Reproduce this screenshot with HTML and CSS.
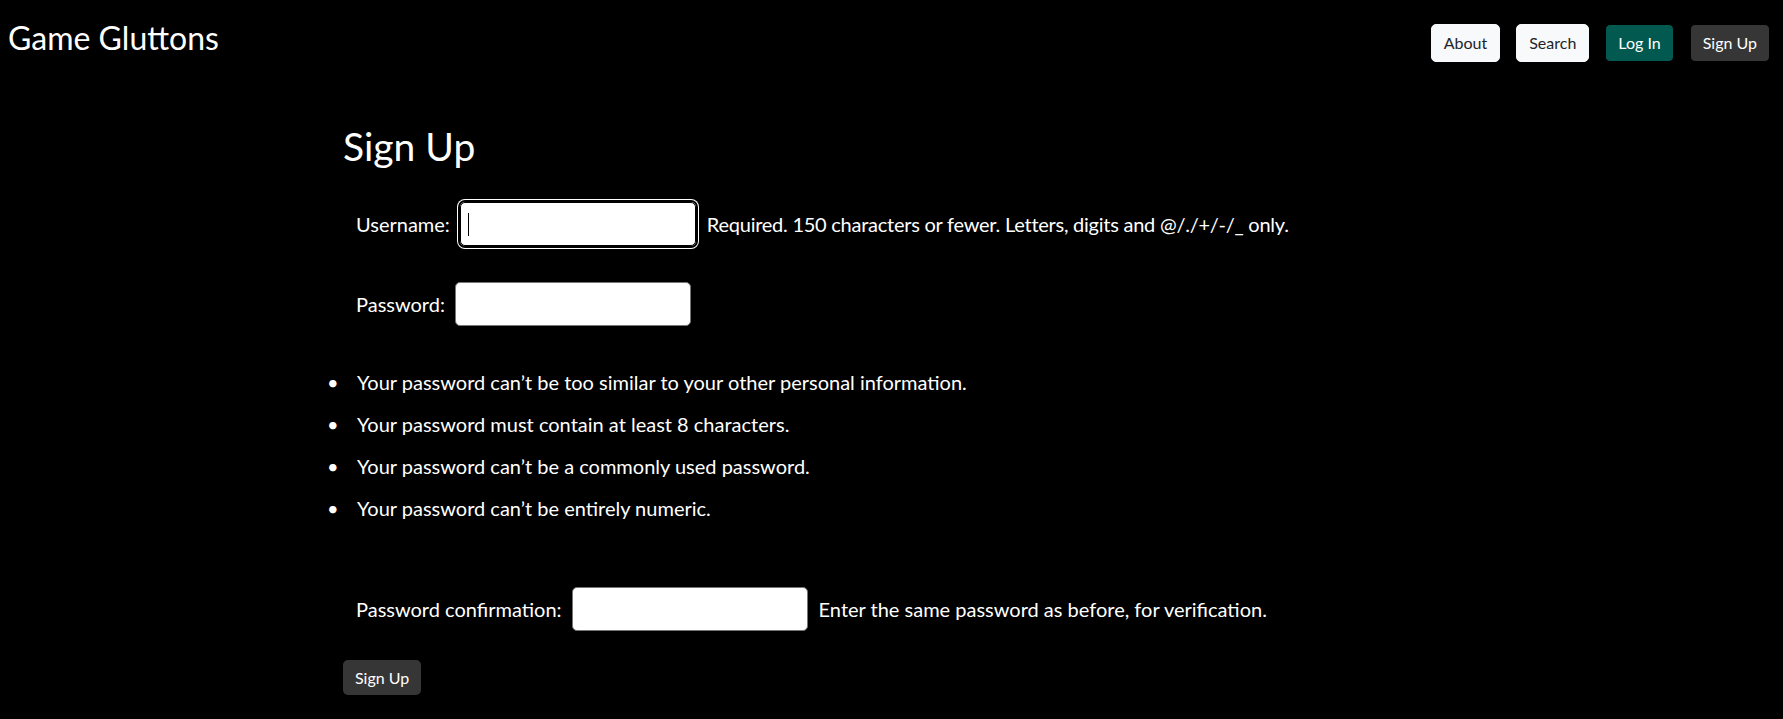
FILE: index.html
```html
<!DOCTYPE html>
<html lang="en">
<head>
<meta charset="utf-8">
<title>Sign Up - Game Gluttons</title>
<link rel="stylesheet" href="styles.css">
</head>
<body>
<header class="topbar">
  <div class="brand">Game Gluttons</div>
  <nav class="nav">
    <a class="btn btn-light" href="#">About</a>
    <a class="btn btn-light" href="#">Search</a>
    <a class="btn btn-teal" href="#">Log In</a>
    <a class="btn btn-dark" href="#">Sign Up</a>
  </nav>
</header>
<main class="content">
  <h1 class="title">Sign Up</h1>
  <form class="form">
    <div class="field field-user">
      <label for="u">Username:</label>
      <input id="u" class="input input-focus" type="text">
      <span class="help help-user">Required. 150 characters or fewer. Letters, digits and @/./+/-/_ only.</span>
    </div>
    <div class="field field-pass">
      <label for="p">Password:</label>
      <input id="p" class="input" type="password">
    </div>
    <ul class="rules">
      <li>Your password can’t be too similar to your other personal information.</li>
      <li>Your password must contain at least 8 characters.</li>
      <li>Your password can’t be a commonly used password.</li>
      <li>Your password can’t be entirely numeric.</li>
    </ul>
    <div class="field field-confirm">
      <label for="c">Password confirmation:</label>
      <input id="c" class="input" type="password">
      <span class="help">Enter the same password as before, for verification.</span>
    </div>
    <button type="button" class="btn btn-dark btn-submit">Sign Up</button>
  </form>
</main>
</body>
</html>
```
FILE: styles.css
```css
* { box-sizing: border-box; }
html, body { background: #000; }
body {
  margin: 0;
  color: #fff;
  font-family: Lato, "Open Sans", "Liberation Sans", sans-serif;
  font-size: 20px;
  line-height: 30px;
}
.topbar {
  display: flex;
  justify-content: space-between;
  align-items: flex-start;
  padding: 19px 13px 0 8px;
}
.brand {
  font-size: 32px;
  line-height: 38px;
}
.nav {
  display: flex;
  gap: 16px;
  margin-top: 5px;
}
.btn {
  display: inline-block;
  font-family: Lato, "Open Sans", "Liberation Sans", sans-serif;
  font-size: 16px;
  line-height: 24px;
  padding: 6px 12px;
  border: 1px solid #000;
  border-radius: 5px;
  text-decoration: none;
  cursor: pointer;
}
.btn-light { background: #f8f9fa; border-color: #f8f9fa; color: #212529; }
.btn-teal { background: #02594f; color: #fff; }
.btn-dark { background: #363636; color: #fff; }
.content {
  padding-left: 343px;
}
.title {
  font-size: 39px;
  line-height: 47px;
  font-weight: 400;
  margin: 61px 0 0;
}
.form { display: flex; flex-direction: column; align-items: flex-start; }
.field {
  display: flex;
  align-items: center;
  padding-left: 13px;
}
.field-user { margin-top: 32px; }
.field-pass { margin-top: 36px; }
.field-confirm { margin-top: 64px; }
.input {
  width: 236px;
  height: 44px;
  margin: 0 11px 0 10px;
  border: 1px solid #767676;
  border-radius: 5px;
  background: #fff;
  font: inherit;
}
.input-focus {
  outline: 2px solid #000;
  box-shadow: 0 0 0 3px #fff;
  border-color: #000;
  background: linear-gradient(#000, #000) no-repeat 7px 50% / 1px 23px, #fff;
}
.help-user { letter-spacing: -0.25px; }
.rules {
  margin: 41px 0 0;
  padding-left: 14px;
  list-style: none;
}
.rules li { margin-bottom: 12px; }
.rules li:last-child { margin-bottom: 0; }
.rules li::before {
  content: "•";
  display: inline-block;
  width: 30px;
  margin-left: -30px;
}
.btn-submit {
  margin-top: 29px;
  padding: 5px 12px;
  line-height: 24px;
  border-width: 0;
  height: 35px;
}
```
